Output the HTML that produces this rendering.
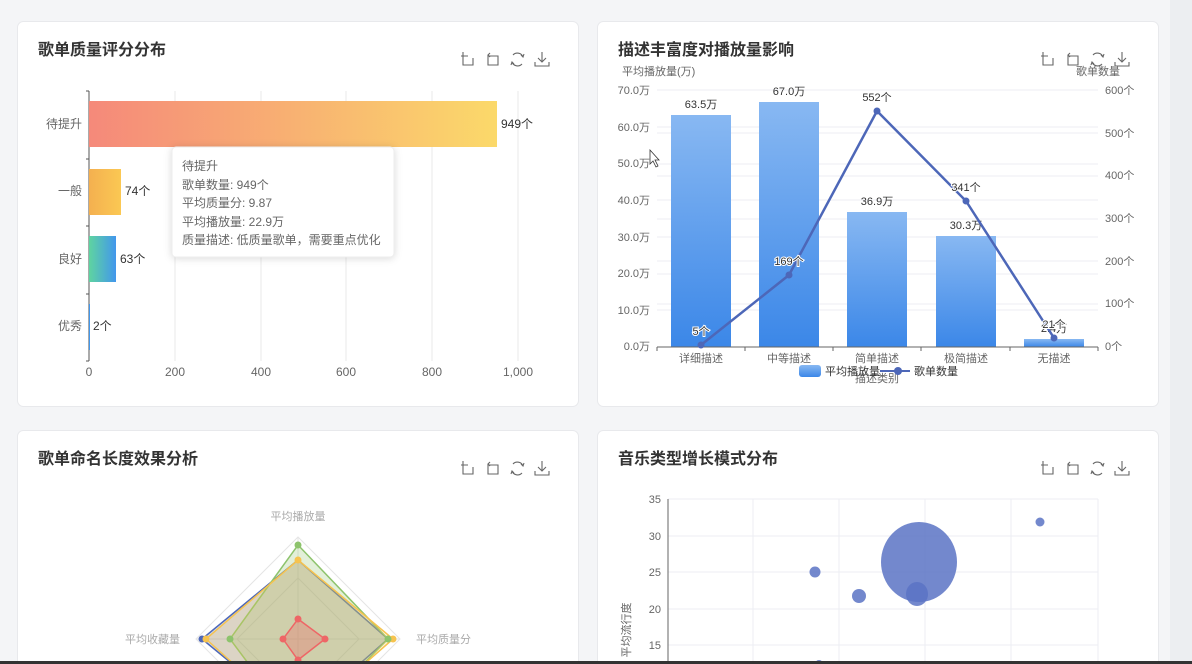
<!DOCTYPE html>
<html><head><meta charset="utf-8"><style>
html,body{margin:0;padding:0;width:1192px;height:664px;overflow:hidden;background:#f4f5f7;font-family:"Liberation Sans","Noto Sans CJK SC",sans-serif}
svg{display:block;position:absolute;left:0;top:0}
text{font-family:"Liberation Sans","Noto Sans CJK SC",sans-serif}
</style></head><body>
<svg width="1192" height="664" viewBox="0 0 1192 664" xmlns="http://www.w3.org/2000/svg">
<defs>
<linearGradient id="g1" x1="0" x2="1" y1="0" y2="0"><stop offset="0" stop-color="#f5897a"/><stop offset="1" stop-color="#fbd96a"/></linearGradient>
<linearGradient id="g2" x1="0" x2="1"><stop offset="0" stop-color="#f4b050"/><stop offset="1" stop-color="#fbc853"/></linearGradient>
<linearGradient id="g3" x1="0" x2="1"><stop offset="0" stop-color="#5fd4a0"/><stop offset="1" stop-color="#4297ec"/></linearGradient>
<linearGradient id="gb" x1="0" x2="0" y1="0" y2="1"><stop offset="0" stop-color="#88b8f2"/><stop offset="1" stop-color="#3b87e8"/></linearGradient>
<g id="tb" fill="none" stroke="#666" stroke-width="1.1">
<path d="M2 2v11h10V6M0 4h4M2 0v2M4 4h3"/>
<path d="M27 3v10h10V4H28M29 1l-2 2 2 2"/>
<path d="M52 3a6 6 0 0 1 10 2M61 12a6 6 0 0 1-10-2M60 3l2 2 1-3M53 12l-2-2-1 3"/>
<path d="M81 0v10M77 6l4 4 4-4M74 10v4h14v-4"/>
</g>
</defs>
<rect x="1170" y="0" width="22" height="664" fill="#eceef1"/>
<rect x="17.5" y="21.5" width="561" height="385" rx="6" fill="#fff" stroke="#e8e9ec"/>
<rect x="597.5" y="21.5" width="561" height="385" rx="6" fill="#fff" stroke="#e8e9ec"/>
<rect x="17.5" y="430.5" width="561" height="240" rx="6" fill="#fff" stroke="#e8e9ec"/>
<rect x="597.5" y="430.5" width="561" height="240" rx="6" fill="#fff" stroke="#e8e9ec"/>

<text x="38" y="55" font-size="16" font-weight="bold" fill="#333">歌单质量评分分布</text>
<use href="#tb" x="461" y="52"/>
<g stroke="#eaeaea"><line x1="175" y1="91" x2="175" y2="361"/><line x1="261" y1="91" x2="261" y2="361"/><line x1="346" y1="91" x2="346" y2="361"/><line x1="432" y1="91" x2="432" y2="361"/><line x1="518" y1="91" x2="518" y2="361"/></g>
<g stroke="#555"><line x1="89" y1="91" x2="89" y2="361"/><line x1="86" y1="91" x2="89" y2="91"/><line x1="86" y1="159" x2="89" y2="159"/><line x1="86" y1="226" x2="89" y2="226"/><line x1="86" y1="294" x2="89" y2="294"/><line x1="86" y1="361" x2="89" y2="361"/></g>
<rect x="89" y="101" width="408" height="46" fill="url(#g1)"/>
<rect x="89" y="169" width="32" height="46" fill="url(#g2)"/>
<rect x="89" y="236" width="27" height="46" fill="url(#g3)"/>
<rect x="89" y="304" width="1" height="46" fill="#4297ec"/>
<g font-size="12" fill="#666" text-anchor="end"><text x="82" y="128">待提升</text><text x="82" y="195">一般</text><text x="82" y="263">良好</text><text x="82" y="330">优秀</text></g>
<g font-size="12" fill="#333"><text x="501" y="128">949个</text><text x="125" y="195">74个</text><text x="120" y="263">63个</text><text x="93" y="330">2个</text></g>
<g font-size="12" fill="#666" text-anchor="middle"><text x="89" y="376">0</text><text x="175" y="376">200</text><text x="261" y="376">400</text><text x="346" y="376">600</text><text x="432" y="376">800</text><text x="518" y="376">1,000</text></g>
<rect x="172" y="147" width="222" height="110" rx="4" fill="#fff" stroke="#eee" style="filter:drop-shadow(0 1px 4px rgba(0,0,0,.15))"/>
<g font-size="12" fill="#666"><text x="182" y="170">待提升</text><text x="182" y="189">歌单数量: 949个</text><text x="182" y="207">平均质量分: 9.87</text><text x="182" y="226">平均播放量: 22.9万</text><text x="182" y="244">质量描述: 低质量歌单，需要重点优化</text></g>

<text x="618" y="55" font-size="16" font-weight="bold" fill="#333">描述丰富度对播放量影响</text>
<use href="#tb" x="1041" y="52"/>
<g font-size="11" fill="#666"><text x="622" y="75">平均播放量(万)</text><text x="1120" y="75" text-anchor="end">歌单数量</text></g>
<g stroke="#eceef3"><line x1="657" y1="90" x2="1098" y2="90"/><line x1="657" y1="127" x2="1098" y2="127"/><line x1="657" y1="164" x2="1098" y2="164"/><line x1="657" y1="200" x2="1098" y2="200"/><line x1="657" y1="237" x2="1098" y2="237"/><line x1="657" y1="274" x2="1098" y2="274"/><line x1="657" y1="310" x2="1098" y2="310"/><line x1="657" y1="133" x2="1098" y2="133"/><line x1="657" y1="176" x2="1098" y2="176"/><line x1="657" y1="219" x2="1098" y2="219"/><line x1="657" y1="261" x2="1098" y2="261"/><line x1="657" y1="304" x2="1098" y2="304"/></g>
<g fill="url(#gb)"><rect x="671" y="115" width="60" height="232"/><rect x="759" y="102" width="60" height="245"/><rect x="847" y="212" width="60" height="135"/><rect x="936" y="236" width="60" height="111"/><rect x="1024" y="339" width="60" height="8"/></g>
<line x1="657" y1="347" x2="1098" y2="347" stroke="#666"/>
<g stroke="#666"><line x1="657" y1="347" x2="657" y2="351"/><line x1="745" y1="347" x2="745" y2="351"/><line x1="833" y1="347" x2="833" y2="351"/><line x1="921" y1="347" x2="921" y2="351"/><line x1="1010" y1="347" x2="1010" y2="351"/><line x1="1098" y1="347" x2="1098" y2="351"/></g>
<g font-size="11" fill="#666" text-anchor="end"><text x="650" y="94">70.0万</text><text x="650" y="131">60.0万</text><text x="650" y="167">50.0万</text><text x="650" y="204">40.0万</text><text x="650" y="241">30.0万</text><text x="650" y="277">20.0万</text><text x="650" y="314">10.0万</text><text x="650" y="350">0.0万</text></g>
<g font-size="11" fill="#666"><text x="1105" y="94">600个</text><text x="1105" y="137">500个</text><text x="1105" y="179">400个</text><text x="1105" y="222">300个</text><text x="1105" y="265">200个</text><text x="1105" y="307">100个</text><text x="1105" y="350">0个</text></g>
<g font-size="11" fill="#666" text-anchor="middle"><text x="701" y="362">详细描述</text><text x="789" y="362">中等描述</text><text x="877" y="362">简单描述</text><text x="966" y="362">极简描述</text><text x="1054" y="362">无描述</text><text x="877" y="382">描述类别</text></g>
<g font-size="11" fill="#333" text-anchor="middle"><text x="701" y="108">63.5万</text><text x="789" y="95">67.0万</text><text x="877" y="205">36.9万</text><text x="966" y="229">30.3万</text><text x="1054" y="332">2.4万</text></g>
<polyline points="701,345 789,275 877,111 966,201 1054,338" fill="none" stroke="#4d67b8" stroke-width="2.5"/>
<g fill="#4d67b8"><circle cx="701" cy="345" r="3.5"/><circle cx="789" cy="275" r="3.5"/><circle cx="877" cy="111" r="3.5"/><circle cx="966" cy="201" r="3.5"/><circle cx="1054" cy="338" r="3.5"/></g>
<g font-size="11" fill="#333" text-anchor="middle" stroke="#fff" stroke-width="2" paint-order="stroke"><text x="701" y="335">5个</text><text x="789" y="265">169个</text><text x="877" y="101">552个</text><text x="966" y="191">341个</text><text x="1054" y="328">21个</text></g>
<rect x="799" y="365" width="22" height="12" rx="3" fill="url(#gb)"/>
<text x="825" y="375" font-size="11" fill="#333">平均播放量</text>
<line x1="880" y1="371" x2="910" y2="371" stroke="#4d67b8" stroke-width="2"/><circle cx="898" cy="371" r="4" fill="#4d67b8"/>
<text x="914" y="375" font-size="11" fill="#333">歌单数量</text>
<path d="M650 150v14l3-3 3 6 2-1-3-6h4z" fill="#fff" stroke="#333" stroke-width=".8"/>

<text x="38" y="464" font-size="16" font-weight="bold" fill="#333">歌单命名长度效果分析</text>
<use href="#tb" x="461" y="461"/>
<g fill="none" stroke="#e5e5e5"><polygon points="298,537 400,639 298,741 196,639"/><polygon points="298,578 359,639 298,700 237,639"/><line x1="298" y1="537" x2="298" y2="741"/><line x1="196" y1="639" x2="400" y2="639"/></g>
<polygon points="298,560 388,639 298,718 202,639" fill="rgba(77,103,184,.25)" stroke="#4d67b8" stroke-width="1.5"/>
<polygon points="298,545 388,639 298,730 230,639" fill="rgba(140,190,100,.25)" stroke="#8dc36c" stroke-width="1.5"/>
<polygon points="298,560 393,639 298,722 206,639" fill="rgba(250,200,80,.25)" stroke="#f6c34f" stroke-width="1.5"/>
<polygon points="298,619 325,639 298,660 283,639" fill="rgba(238,100,100,.3)" stroke="#ee6666" stroke-width="1.5"/>
<g><circle cx="298" cy="545" r="3.5" fill="#8dc36c"/><circle cx="298" cy="560" r="3.5" fill="#f6c34f"/><circle cx="393" cy="639" r="3.5" fill="#f6c34f"/><circle cx="388" cy="639" r="3.5" fill="#8dc36c"/><circle cx="202" cy="639" r="3.5" fill="#4d67b8"/><circle cx="206" cy="639" r="3.5" fill="#f6c34f"/><circle cx="230" cy="639" r="3.5" fill="#8dc36c"/><circle cx="298" cy="619" r="3.5" fill="#ee6666"/><circle cx="283" cy="639" r="3.5" fill="#ee6666"/><circle cx="325" cy="639" r="3.5" fill="#ee6666"/><circle cx="298" cy="660" r="3.5" fill="#ee6666"/></g>
<g font-size="11" fill="#aaa"><text x="298" y="520" text-anchor="middle">平均播放量</text><text x="416" y="643">平均质量分</text><text x="180" y="643" text-anchor="end">平均收藏量</text></g>

<text x="618" y="464" font-size="16" font-weight="bold" fill="#333">音乐类型增长模式分布</text>
<use href="#tb" x="1041" y="461"/>
<g stroke="#eceef3"><line x1="668" y1="499" x2="1098" y2="499"/><line x1="668" y1="536" x2="1098" y2="536"/><line x1="668" y1="572" x2="1098" y2="572"/><line x1="668" y1="609" x2="1098" y2="609"/><line x1="668" y1="645" x2="1098" y2="645"/><line x1="753" y1="499" x2="753" y2="664"/><line x1="839" y1="499" x2="839" y2="664"/><line x1="925" y1="499" x2="925" y2="664"/><line x1="1011" y1="499" x2="1011" y2="664"/><line x1="1098" y1="499" x2="1098" y2="664"/></g>
<line x1="668" y1="499" x2="668" y2="664" stroke="#666"/>
<g font-size="11" fill="#666" text-anchor="end"><text x="661" y="503">35</text><text x="661" y="540">30</text><text x="661" y="576">25</text><text x="661" y="613">20</text><text x="661" y="649">15</text></g>
<text x="630" y="630" font-size="11" fill="#666" transform="rotate(-90 630 630)" text-anchor="middle">平均流行度</text>
<g fill="#5a73c4" fill-opacity=".85"><ellipse cx="919" cy="562" rx="38" ry="40"/><circle cx="815" cy="572" r="5.5"/><ellipse cx="859" cy="596" rx="7" ry="7"/><ellipse cx="917" cy="594" rx="11" ry="12"/><circle cx="1040" cy="522" r="4.5"/><circle cx="819" cy="664" r="4"/></g>
<rect x="0" y="661" width="1192" height="3" fill="#333"/>
</svg>
</body></html>
